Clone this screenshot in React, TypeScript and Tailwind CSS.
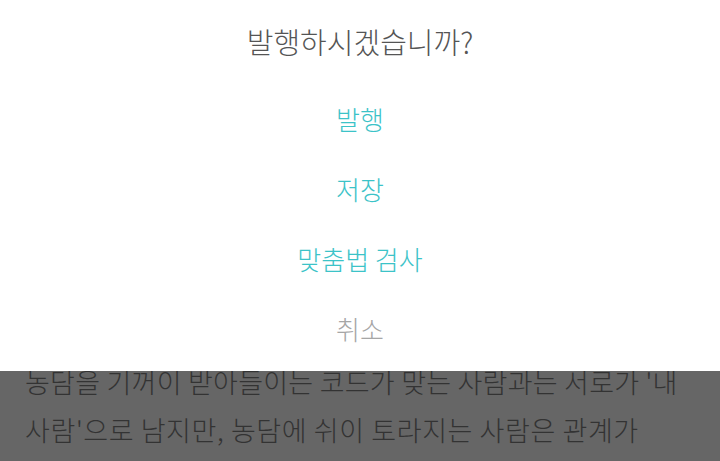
export default function App() {
  const font = { fontFamily: '"Noto Sans CJK KR", "Noto Sans", sans-serif' };
  return (
    <div className="relative h-[461px] w-[720px] overflow-hidden bg-[#666666]" style={font}>
      {/* dimmed page behind the dialog */}
      <div className="pt-[358px] pl-[25px] text-[27px] font-light leading-[48px] text-[#333333] whitespace-nowrap">
        <p className="tracking-[0.25px]">농담을 기꺼이 받아들이는 코드가 맞는 사람과는 서로가 '내</p>
        <p className="tracking-[0.6px]">사람'으로 남지만, 농담에 쉬이 토라지는 사람은 관계가</p>
      </div>

      <div className="absolute inset-x-0 top-0 flex h-[371px] flex-col items-center bg-white">
        <h2 className="h-[82px] text-[29px] font-light leading-[82px] text-[#555555]">
          발행하시겠습니까?
        </h2>
        <div className="mt-[2px] flex flex-col items-center">
          <button className="h-[70px] text-[26px] font-light leading-[70px] text-[#3cc3c8]">발행</button>
          <button className="h-[70px] text-[26px] font-light leading-[70px] text-[#3cc3c8]">저장</button>
          <button className="h-[70px] text-[26px] font-light leading-[70px] text-[#3cc3c8]">맞춤법 검사</button>
          <button className="h-[70px] text-[26px] font-light leading-[70px] text-[#a6a6a6]">취소</button>
        </div>
      </div>
    </div>
  );
}
